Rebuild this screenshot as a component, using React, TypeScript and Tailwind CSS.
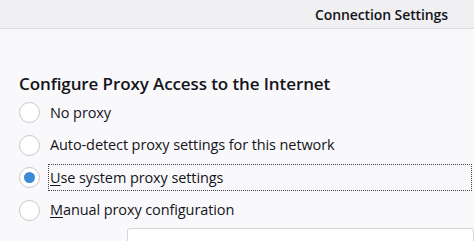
import React from 'react';

const font = { fontFamily: '"Open Sans", "Noto Sans", sans-serif' };

type Option = { id: string; label: string; accessKey?: number; checked?: boolean };

const options: Option[] = [
  { id: 'none', label: 'No proxy' },
  { id: 'auto', label: 'Auto-detect proxy settings for this network' },
  { id: 'system', label: 'Use system proxy settings', accessKey: 0, checked: true },
  { id: 'manual', label: 'Manual proxy configuration', accessKey: 0 },
];

function Radio({ checked }: { checked?: boolean }) {
  return (
    <div className="flex h-[21px] w-[21px] shrink-0 items-center justify-center rounded-full border border-[#c9c7cc] bg-white">
      {checked && <div className="h-[11px] w-[11px] rounded-full bg-[#3a8ad6]" />}
    </div>
  );
}

function Label({ opt }: { opt: Option }) {
  if (opt.accessKey === undefined) return <>{opt.label}</>;
  const i = opt.accessKey;
  return (
    <>
      {opt.label.slice(0, i)}
      <span className="underline underline-offset-2">{opt.label[i]}</span>
      {opt.label.slice(i + 1)}
    </>
  );
}

export default function App() {
  return (
    <div className="h-[241px] w-[474px] overflow-hidden bg-[#f9f9fb] text-[#15141a]" style={font}>
      {/* Title bar */}
      <div className="flex h-[29px] items-center justify-end border-b border-[#dcdcdf] bg-[#f0f0f2] pr-[26px]">
        <span className="text-[14px] font-semibold tracking-[-0.1px]">Connection Settings</span>
      </div>

      {/* Body */}
      <div className="pt-[44px] pl-[19px]">
        <h2 className="text-[17px] font-semibold leading-[22px] tracking-[-0.1px]">Configure Proxy Access to the Internet</h2>

        <div className="mt-[1.5px] flex flex-col">
          {options.map((opt) => (
            <div key={opt.id} className="flex h-[32.5px] items-center">
              <Radio checked={opt.checked} />
              <div
                className={`ml-[8px] flex h-[27px] flex-1 items-center pl-px text-[14.5px] tracking-[-0.1px] ${
                  opt.checked ? 'mr-[2px] border border-dotted border-[#444]' : 'border border-transparent'
                }`}
              >
                <Label opt={opt} />
              </div>
            </div>
          ))}
        </div>

        <div className="mt-[1px] flex items-start">
          <span className="mt-[9px] w-[108px] pl-[36px] text-[14.5px] leading-[20px]">HTTP Proxy</span>
          <div className="h-[30px] flex-1 rounded-[3px] border border-[#d6d6d9] bg-white" />
        </div>
      </div>
    </div>
  );
}
